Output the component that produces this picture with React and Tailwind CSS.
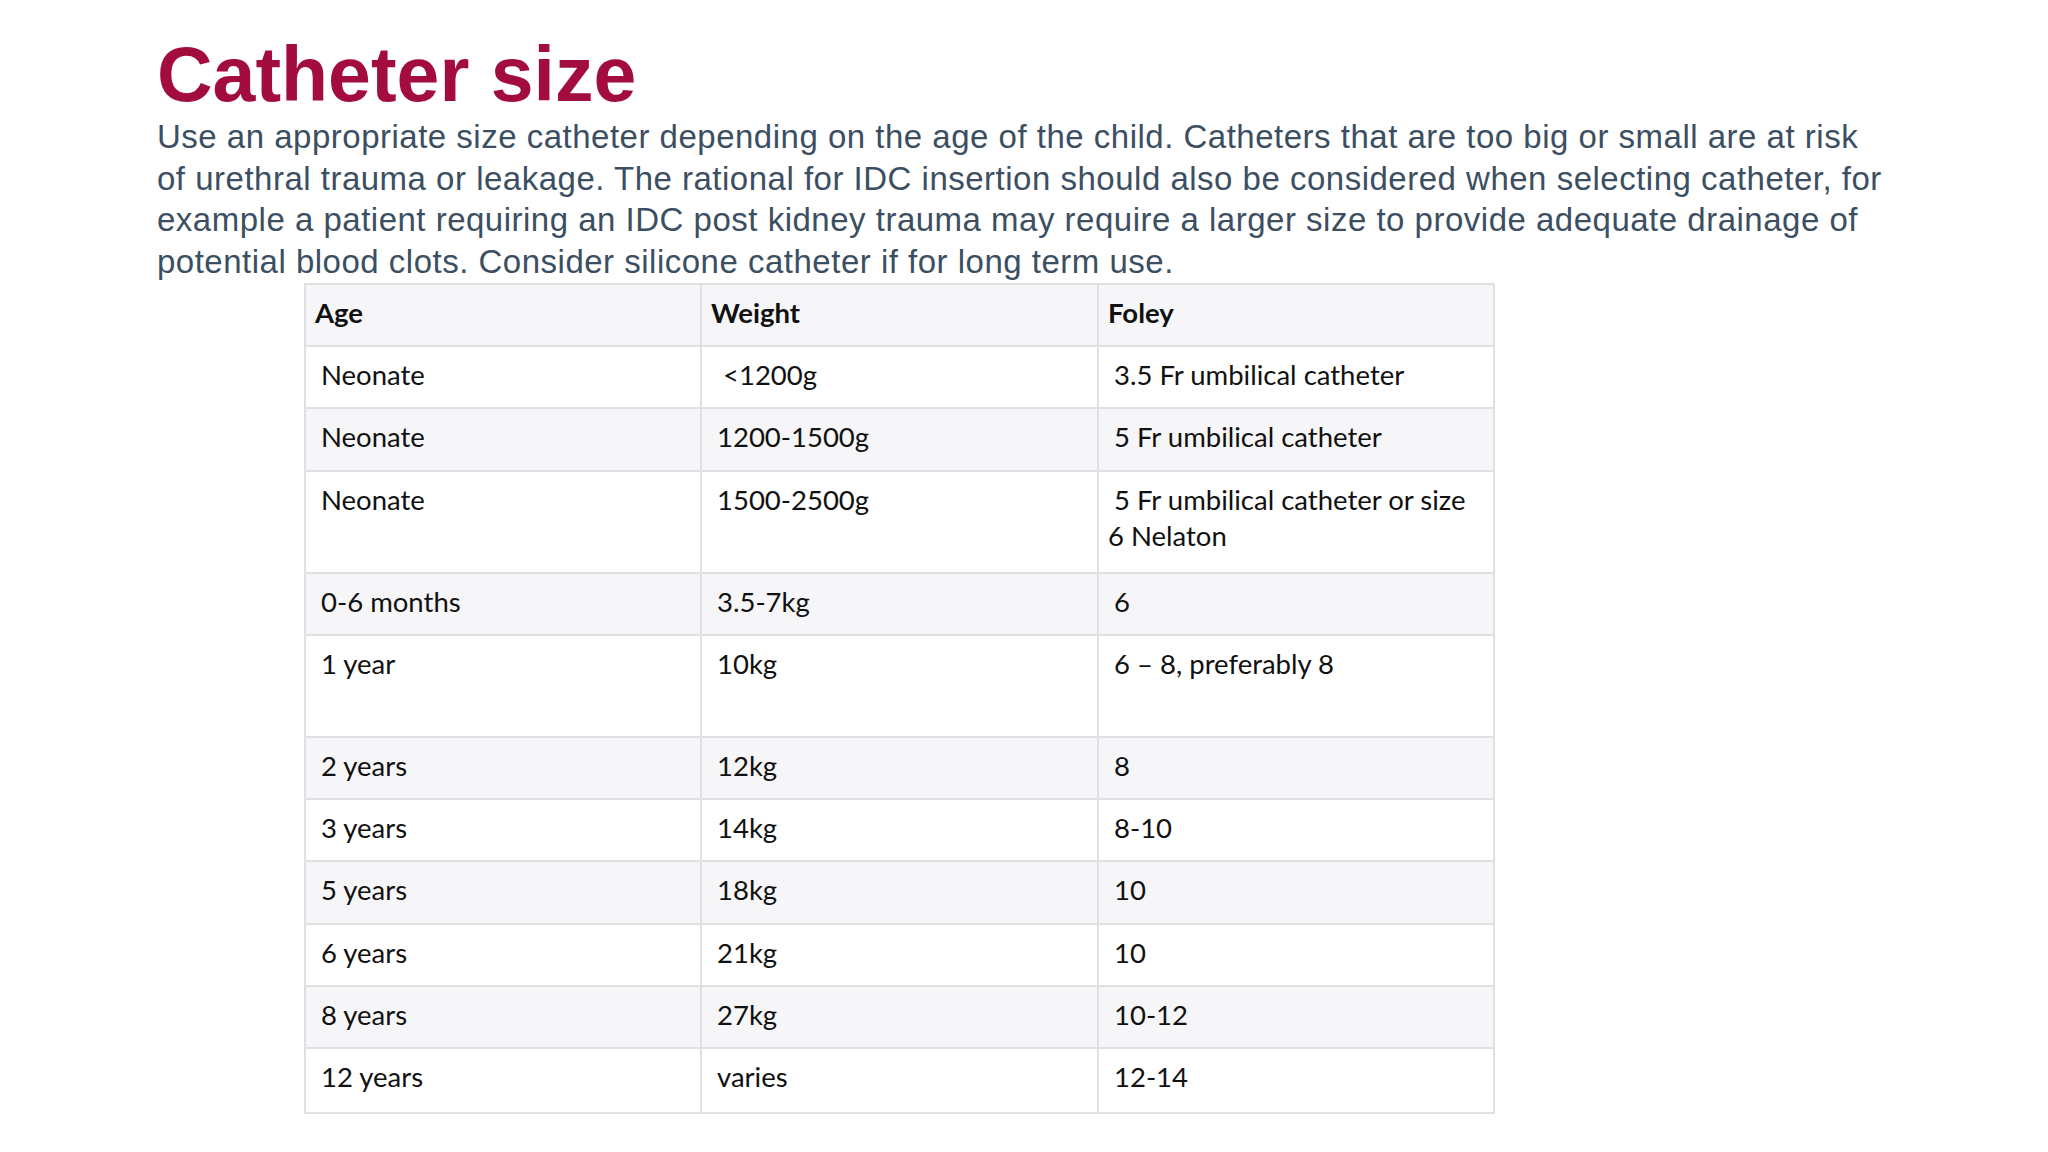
import React from "react";

const rows = [
  { a: "Neonate", w: "<1200g", f: "3.5 Fr umbilical catheter", gray: false, tall: false, wPad: "wide" },
  { a: "Neonate", w: "1200-1500g", f: "5 Fr umbilical catheter", gray: true, tall: false },
  { a: "Neonate", w: "1500-2500g", f: "nelaton", gray: false, tall: true },
  { a: "0-6 months", w: "3.5-7kg", f: "6", gray: true, tall: false },
  { a: "1 year", w: "10kg", f: "6 – 8, preferably 8", gray: false, tall: true },
  { a: "2 years", w: "12kg", f: "8", gray: true, tall: false },
  { a: "3 years", w: "14kg", f: "8-10", gray: false, tall: false },
  { a: "5 years", w: "18kg", f: "10", gray: true, tall: false },
  { a: "6 years", w: "21kg", f: "10", gray: false, tall: false },
  { a: "8 years", w: "27kg", f: "10-12", gray: true, tall: false },
  { a: "12 years", w: "varies", f: "12-14", gray: false, tall: false },
];

function Cell({ children, className = "", last = false }) {
  return (
    <div
      className={
        "pt-[10px] leading-[36.5px] " +
        (last ? "" : "border-r-2 border-[#e0e0e3] ") +
        className
      }
    >
      {children}
    </div>
  );
}

export default function App() {
  return (
    <div className="w-[2048px] h-[1152px] bg-white overflow-hidden pl-[157px] pt-[36px]">
      <h1
        className="text-[77px] leading-[76px] font-bold text-[#a30d3d]"
        style={{ fontFamily: '"Liberation Sans", Arial, sans-serif' }}
      >
        Catheter size
      </h1>
      <div
        className="mt-[4px] text-[33px] leading-[41.5px] tracking-[0.5px] text-[#3c4f62]"
        style={{ fontFamily: '"Liberation Sans", Arial, sans-serif' }}
      >
        <div className="whitespace-nowrap">
          Use an appropriate size catheter depending on the age of the child. Catheters that are too big or small are at risk
        </div>
        <div className="whitespace-nowrap">
          of urethral trauma or leakage. The rational for IDC insertion should also be considered when selecting catheter, for
        </div>
        <div className="whitespace-nowrap">
          example a patient requiring an IDC post kidney trauma may require a larger size to provide adequate drainage of
        </div>
        <div className="whitespace-nowrap">
          potential blood clots. Consider silicone catheter if for long term use.
        </div>
      </div>

      <div
        className="ml-[147px] mt-[1px] w-[1191px] border-2 border-[#e0e0e3] text-[27.5px] text-[#111111]"
        style={{ fontFamily: 'Lato, "Noto Sans", sans-serif' }}
      >
        <div className="grid grid-cols-[396px_397px_1fr] h-[62px] bg-[#f6f6f8] border-b-2 border-[#e0e0e3] font-bold">
          <Cell className="pl-[9px]">Age</Cell>
          <Cell className="pl-[9px]">Weight</Cell>
          <Cell className="pl-[9px]" last>Foley</Cell>
        </div>
        {rows.map((r, i) => (
          <div
            key={i}
            className={
              "grid grid-cols-[396px_397px_1fr] " +
              (r.tall ? "h-[102px] " : "h-[62.3px] ") +
              (r.gray ? "bg-[#f6f6f8] " : "bg-white ") +
              (i === rows.length - 1 ? "" : "border-b-2 border-[#e0e0e3]")
            }
          >
            <Cell className="pl-[15px]">{r.a}</Cell>
            <Cell className={r.wPad === "wide" ? "pl-[21px]" : "pl-[15px]"}>{r.w}</Cell>
            {r.f === "nelaton" ? (
              <Cell className="pl-[9px] pr-[6px] indent-[6px]" last>
                5 Fr umbilical catheter or size 6 Nelaton
              </Cell>
            ) : (
              <Cell className="pl-[15px]" last>
                {r.f}
              </Cell>
            )}
          </div>
        ))}
      </div>
    </div>
  );
}
